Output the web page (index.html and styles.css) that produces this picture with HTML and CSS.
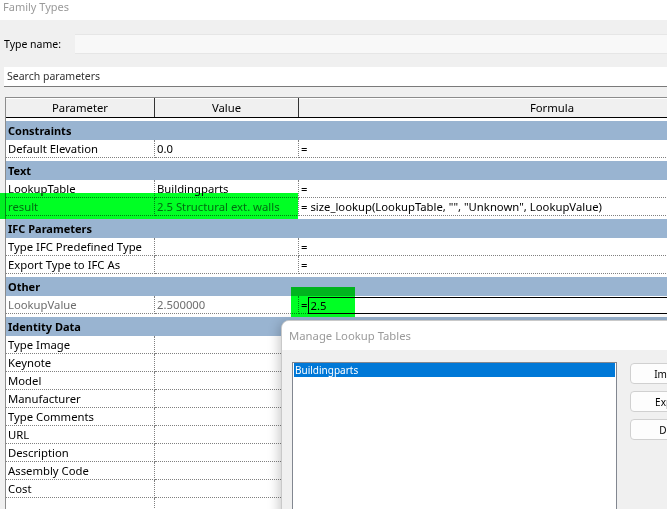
FILE: index.html
```html
<!DOCTYPE html>
<html lang="en">
<head>
    <meta charset="UTF-8">
    <title>Family Types</title>
    <link rel="stylesheet" href="styles.css">
</head>
<body>
    <div class="window">
        <div class="titlebar">Family Types</div>

        <div class="type-name">
            <label>Type name:</label>
            <div class="type-field"></div>
        </div>

        <div class="search">Search parameters</div>

        <div class="grid">
            <div class="head">
                <div>Parameter</div>
                <div>Value</div>
                <div>Formula</div>
            </div>

            <div class="group"><div class="band">Constraints</div></div>
            <div class="row"><div>Default Elevation</div><div>0.0</div><div>=</div></div>

            <div class="group"><div class="band">Text</div></div>
            <div class="row"><div>LookupTable</div><div>Buildingparts</div><div>=</div></div>
            <div class="row muted"><div>result</div><div>2.5 Structural ext. walls</div><div class="formula">= size_lookup(LookupTable, "", "Unknown", LookupValue)</div></div>

            <div class="group"><div class="band">IFC Parameters</div></div>
            <div class="row"><div>Type IFC Predefined Type</div><div></div><div>=</div></div>
            <div class="row"><div>Export Type to IFC As</div><div></div><div>=</div></div>

            <div class="group"><div class="band">Other</div></div>
            <div class="row muted"><div>LookupValue</div><div>2.500000</div><div class="formula editing"><span>=</span><span class="edit">2.5</span></div></div>

            <div class="group"><div class="band">Identity Data</div></div>
            <div class="row"><div>Type Image</div><div></div><div></div></div>
            <div class="row"><div>Keynote</div><div></div><div></div></div>
            <div class="row"><div>Model</div><div></div><div></div></div>
            <div class="row"><div>Manufacturer</div><div></div><div></div></div>
            <div class="row"><div>Type Comments</div><div></div><div></div></div>
            <div class="row"><div>URL</div><div></div><div></div></div>
            <div class="row"><div>Description</div><div></div><div></div></div>
            <div class="row"><div>Assembly Code</div><div></div><div></div></div>
            <div class="row"><div>Cost</div><div></div><div></div></div>
            <div class="row"><div></div><div></div><div></div></div>
        </div>
    </div>

    <!-- highlighter marks drawn over the grid -->
    <div class="mark mark-result"></div>
    <div class="mark mark-value"></div>

    <!-- Manage Lookup Tables dialog -->
    <div class="dialog">
        <div class="dialog-title">Manage Lookup Tables</div>
        <div class="dialog-body">
            <div class="list">
                <div class="list-item selected">Buildingparts</div>
            </div>
            <div class="buttons">
                <button>Import...</button>
                <button>Export...</button>
                <button>Delete</button>
            </div>
        </div>
    </div>
</body>
</html>
```

FILE: styles.css
```css
body {
    font-family: 'Noto Sans', 'Open Sans', sans-serif;
    font-size: 11.3px;
    color: #000;
    background-color: #f0f0f0;
    margin: 0;
    width: 667px;
    height: 509px;
    overflow: hidden;
    position: relative;
}

.titlebar {
    height: 20px;
    background-color: #fff;
    color: #9a9a9a;
    padding: 1px 0 0 3px;
    box-sizing: border-box;
    font-size: 11px;
    line-height: 12px;
}

.type-name {
    display: flex;
    align-items: center;
    padding: 14px 0 13px 4px;
}

.type-name label {
    width: 71px;
    font-size: 10.5px;
}

.type-field {
    flex: 1;
    height: 18px;
    background-color: #f8f8f8;
    border-top: 1px solid #e6e6e6;
    border-bottom: 1px solid #e6e6e6;
}

.search {
    margin-left: 4px;
    height: 19px;
    line-height: 19px;
    padding-left: 3px;
    background-color: #fff;
    border-bottom: 1px solid #7a7a7a;
    color: #333;
    font-size: 10.5px;
}

/* parameter grid */
.grid {
    margin: 10px 0 0 5px;
    width: 800px;
    border-top: 1px solid #8c8c8c;
    border-left: 1px solid #8c8c8c;
    background-color: #fff;
}

.head,
.row {
    display: grid;
    grid-template-columns: 149px 144px 1fr;
}

.head {
    height: 20px;
    background-color: #f0f0f0;
    border-bottom: 1px solid #000;
    box-sizing: border-box;
    box-shadow: inset 0 1px #fff;
}

.head div {
    text-align: center;
    line-height: 19px;
    border-right: 1px solid #333;
}

.group {
    padding-top: 3px;
    background-color: #fff;
}

.band {
    height: 19px;
    line-height: 19px;
    padding-left: 2px;
    background-color: #99b4d1;
    font-weight: bold;
    font-size: 11px;
}

.row {
    height: 18px;
}

.row div {
    box-sizing: border-box;
    height: 18px;
    line-height: 17px;
    padding-left: 2px;
    white-space: nowrap;
    border-right: 1px dotted #808080;
    border-bottom: 1px dotted #808080;
}

.row.muted div {
    color: #6d6d6d;
}

.row.muted .formula {
    color: #000;
}

.row .editing {
    display: flex;
}

.edit {
    flex: 1;
    height: 17px;
    margin: 1px 0 -1px 1px;
    padding-left: 1px;
    line-height: 15px;
    box-sizing: border-box;
    border: 1px solid #000;
    background-color: #fff;
}

/* green highlighter */
.mark {
    position: absolute;
    background-color: #00ff24;
    mix-blend-mode: multiply;
}

.mark-result {
    left: 0;
    top: 193px;
    width: 298px;
    height: 26px;
}

.mark-value {
    left: 291px;
    top: 287px;
    width: 64px;
    height: 30px;
}

/* dialog */
.dialog {
    position: absolute;
    left: 281px;
    top: 320px;
    width: 460px;
    height: 240px;
    border: 1px solid #c9c9c9;
    border-radius: 8px 0 0 0;
    background-color: #f0f0f0;
    box-shadow: -2px 2px 12px rgba(0, 0, 0, 0.22);
    overflow: hidden;
}

.dialog-title {
    height: 29px;
    line-height: 30px;
    padding-left: 7px;
    background-color: #fff;
    color: #9a9a9a;
}

.dialog-body {
    display: flex;
    align-items: flex-start;
    gap: 13px;
    padding: 12px 0 0 10px;
}

.list {
    flex-shrink: 0;
    width: 323px;
    height: 200px;
    border: 1px solid #828790;
    background-color: #fff;
}

.list-item {
    margin: 0 1px;
    height: 14px;
    line-height: 14px;
    padding-left: 1px;
    font-size: 10px;
}

.list-item.selected {
    background-color: #0078d7;
    color: #fff;
}

.buttons {
    flex-shrink: 0;
    display: flex;
    flex-direction: column;
    gap: 7px;
    padding-top: 1px;
}

.buttons button {
    width: 89px;
    height: 21px;
    font-family: inherit;
    font-size: 10px;
    color: #000;
    background-color: #fdfdfd;
    border: 1px solid #d0d0d0;
    border-radius: 4px;
    padding: 0;
}
```
